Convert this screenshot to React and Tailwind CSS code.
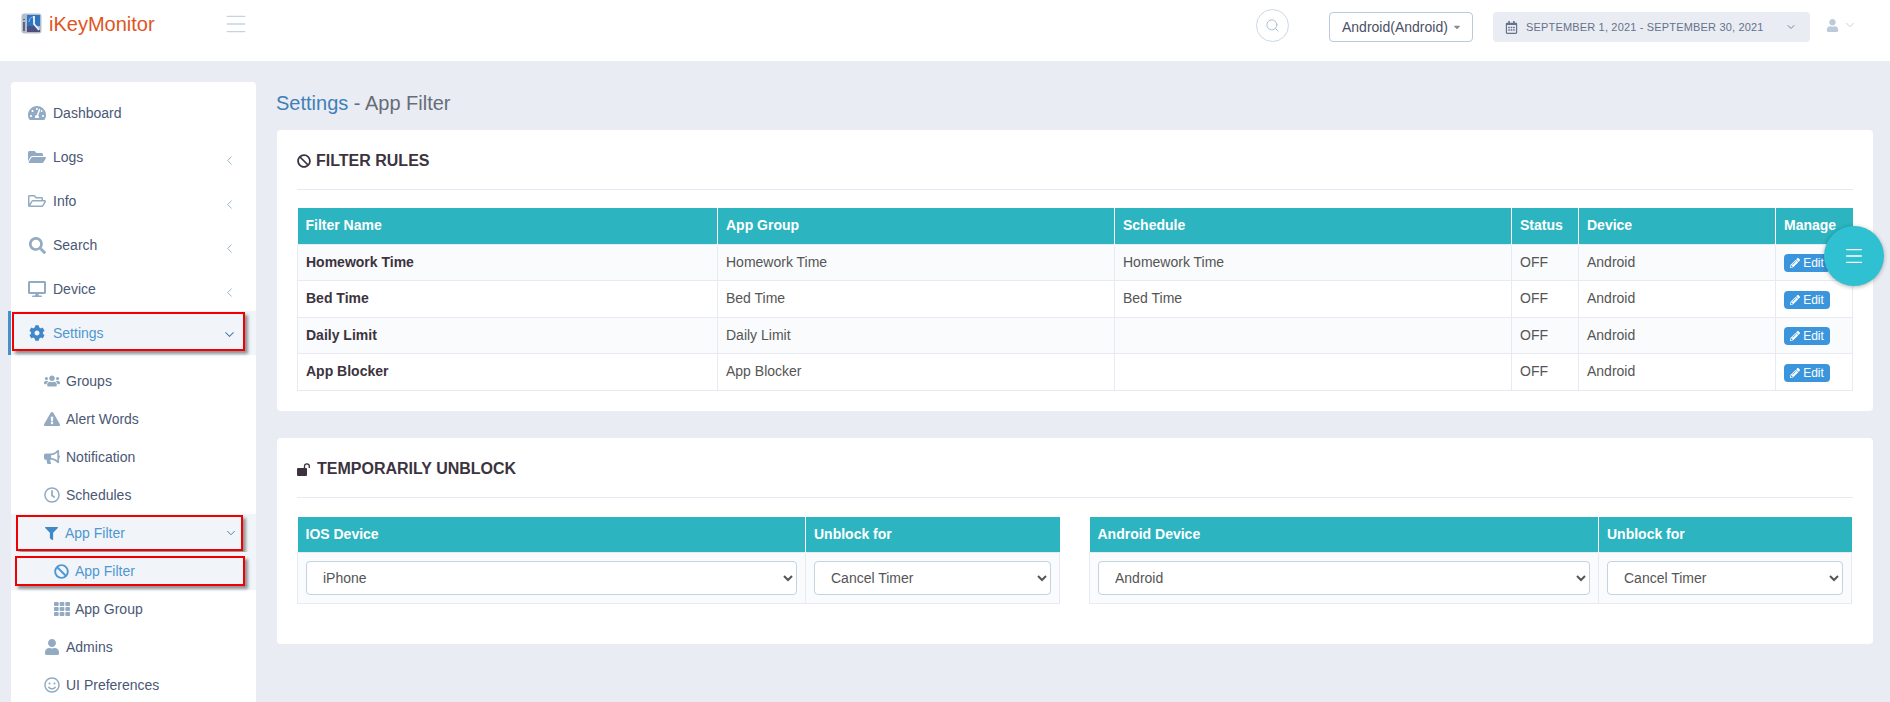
import React from "react";
import {
  FaTachometerAlt,
  FaFolderOpen,
  FaRegFolderOpen,
  FaSearch,
  FaDesktop,
  FaCog,
  FaUsers,
  FaExclamationTriangle,
  FaBullhorn,
  FaRegClock,
  FaFilter,
  FaBan,
  FaTh,
  FaUser,
  FaRegSmile,
  FaPencilAlt,
  FaRegCalendarAlt,
  FaCaretDown,
} from "react-icons/fa";
import { ChevronLeft, ChevronDown, Menu, Search } from "lucide-react";

const font = { fontFamily: '"Liberation Sans", Arial, sans-serif' };

const mainItems = [
  { label: "Dashboard", icon: FaTachometerAlt },
  { label: "Logs", icon: FaFolderOpen, arrow: true },
  { label: "Info", icon: FaRegFolderOpen, arrow: true },
  { label: "Search", icon: FaSearch, arrow: true },
  { label: "Device", icon: FaDesktop, arrow: true },
];

const subItems = [
  { label: "Groups", icon: FaUsers },
  { label: "Alert Words", icon: FaExclamationTriangle },
  { label: "Notification", icon: FaBullhorn },
  { label: "Schedules", icon: FaRegClock },
];

const subItemsAfter = [
  { label: "Admins", icon: FaUser },
  { label: "UI Preferences", icon: FaRegSmile },
];

const rules = [
  { name: "Homework Time", group: "Homework Time", schedule: "Homework Time", h: "h-[36px]" },
  { name: "Bed Time", group: "Bed Time", schedule: "Bed Time", h: "h-[37px]" },
  { name: "Daily Limit", group: "Daily Limit", schedule: "", h: "h-[36px]" },
  { name: "App Blocker", group: "App Blocker", schedule: "", h: "h-[37px]" },
];

const RedBox = ({ className }) => (
  <div
    className={`absolute border-2 border-[#f00000] shadow-[3px_3px_3px_rgba(0,0,0,0.4)] ${className}`}
  ></div>
);

const Logo = () => (
  <svg width="21" height="21" viewBox="0 0 21 21" className="shrink-0">
    <rect x="0.5" y="0.5" width="20" height="20" rx="3" fill="#b4bdcb" />
    <rect x="6" y="2" width="13" height="11" fill="#2f74c0" />
    <path d="M6 13h9l4 4v2H6z" fill="#4a5080" />
    <path d="M3 6v1M3 9v9" stroke="#4a5068" strokeWidth="1.6" fill="none" />
    <path d="M13 3v8l5 6" stroke="#f0f4fa" strokeWidth="1.8" fill="none" />
    <path d="M8 9c0-3 2-5 4-5" stroke="#9cc4ee" strokeWidth="1" fill="none" />
  </svg>
);

// open padlock, shackle lifted to the right
const OpenLock = () => (
  <svg width="14" height="13" viewBox="0 0 14 13" className="mr-[6px] shrink-0">
    <rect x="0" y="5" width="10" height="8" rx="1" fill="currentColor" />
    <path d="M7.5 5V3.2a2.4 2.4 0 0 1 4.8 0V5" fill="none" stroke="currentColor" strokeWidth="1.3" />
  </svg>
);

const MainRow = ({ item }) => {
  const Icon = item.icon;
  return (
    <div className="flex items-center h-[44px] pl-[16px] pr-[19px]">
      <span className="flex justify-center w-[20px] mr-[6px] text-[#93abc2]">
        <Icon size={item.label === "Search" ? 17 : 18} />
      </span>
      <span className="text-[14px] text-[#4a5775]">{item.label}</span>
      {item.arrow && (
        <ChevronLeft size={15} strokeWidth={1.5} className="ml-auto mt-[6px] text-[#8fb0cc]" />
      )}
    </div>
  );
};

const SubRow = ({ item }) => {
  const Icon = item.icon;
  return (
    <div className="flex items-center h-[38px] pl-[32px]">
      <span className="flex justify-center w-[17px] mr-[6px] text-[#93abc2]">
        <Icon size={16} />
      </span>
      <span className="text-[14px] text-[#4a5775]">{item.label}</span>
    </div>
  );
};

const Sidebar = () => (
  <aside className="w-[245px] ml-[11px] mt-[21px] bg-white rounded-t pt-[9px] shrink-0">
    {mainItems.map((item) => (
      <MainRow key={item.label} item={item} />
    ))}

    <div className="relative flex items-center h-[44px] -ml-[3px] pl-[16px] pr-[19px] border-l-[3px] border-[#4a90c8] bg-[#f1f5fa]">
      <span className="flex justify-center w-[20px] mr-[6px] text-[#3f88c9]">
        <FaCog size={16} />
      </span>
      <span className="text-[14px] text-[#4f97cf]">Settings</span>
      <ChevronDown size={15} strokeWidth={1.7} className="ml-auto mt-[2px] text-[#4f7ea8]" />
      <RedBox className="left-[1px] top-[1px] w-[233px] h-[39px]" />
    </div>

    <div className="pt-[7px]">
      {subItems.map((item) => (
        <SubRow key={item.label} item={item} />
      ))}

      <div className="relative flex items-center h-[38px] pl-[32px] pr-[18px] bg-[#f1f5fa]">
        <span className="flex justify-center w-[17px] mr-[5px] text-[#3f88c9]">
          <FaFilter size={13} />
        </span>
        <span className="text-[14px] text-[#4f97cf]">App Filter</span>
        <ChevronDown size={14} strokeWidth={1.7} className="ml-auto text-[#4f7ea8]" />
        <RedBox className="left-[5px] top-[1px] w-[227px] h-[36px]" />
      </div>

      <div className="relative flex items-center h-[38px] pl-[43px] bg-[#f1f5fa]">
        <span className="flex justify-center w-[15px] mr-[6px] text-[#4f97cf]">
          <FaBan size={15} />
        </span>
        <span className="text-[14px] text-[#4f97cf]">App Filter</span>
        <RedBox className="left-[4px] top-[4px] w-[230px] h-[30px]" />
      </div>

      <div className="flex items-center h-[38px] pl-[42px]">
        <span className="flex justify-center w-[17px] mr-[5px] text-[#93abc2]">
          <FaTh size={16} />
        </span>
        <span className="text-[14px] text-[#4a5775]">App Group</span>
      </div>

      {subItemsAfter.map((item) => (
        <SubRow key={item.label} item={item} />
      ))}
    </div>
  </aside>
);

const Header = () => (
  <header className="flex items-center h-[61px] bg-white shrink-0">
    <div className="flex items-center pl-[21px] -mt-[14px]">
      <Logo />
      <span className="ml-[7px] text-[20px] text-[#e0541f]">iKeyMonitor</span>
      <Menu size={26} strokeWidth={1.2} className="ml-[68px] text-[#c5d3e2]" />
    </div>
    <div className="flex items-center ml-auto -mt-[11px]">
      <span className="flex items-center justify-center w-[33px] h-[33px] rounded-full border border-[#cbd8e5]">
        <Search size={15} strokeWidth={1.5} className="text-[#a9bccd]" />
      </span>
      <div className="flex items-center w-[144px] h-[30px] ml-[40px] mt-[4px] pl-[12px] rounded border border-[#b8cadb] text-[14px] text-[#4a5068]">
        Android(Android)
        <FaCaretDown size={10} className="ml-[4px] text-[#8b8b8b]" />
      </div>
      <div className="flex items-center w-[317px] h-[30px] ml-[20px] mt-[4px] pl-[12px] rounded bg-[#e9ecf3] text-[11px] tracking-[0.17px] text-[#66728a]">
        <FaRegCalendarAlt size={13} className="mr-[8px] text-[#66728a]" />
        SEPTEMBER 1, 2021 - SEPTEMBER 30, 2021
        <ChevronDown size={12} className="ml-[21px] text-[#7a8699]" />
      </div>
      <FaUser size={13} className="ml-[16px] text-[#bccbd9]" />
      <ChevronDown size={14} strokeWidth={1.5} className="ml-[4px] mr-[33px] text-[#bccbd9]" />
    </div>
  </header>
);

const EditButton = () => (
  <span className="inline-flex items-center justify-center w-[46px] h-[18px] mt-[1px] rounded-sm bg-[#3a95dc] text-[12px] text-white align-middle">
    <FaPencilAlt size={10} className="mr-[3px]" />
    Edit
  </span>
);

const thClass = "px-[8px] text-left font-bold text-white border-l border-white first:border-l-0";
const tdClass = "px-[8px] border border-[#e7eaf2]";

const FilterRules = () => (
  <section className="bg-white rounded px-[20px] pt-[20px] h-[281px]">
    <h2 className="flex items-center h-[22px] text-[16px] font-bold text-[#3c3340]">
      <FaBan size={14} className="mr-[5px]" />
      FILTER RULES
    </h2>
    <div className="h-px mt-[17px] mb-[18px] bg-[#e7eaf2]"></div>
    <table className="w-[1555px] table-fixed border-collapse text-[14px] text-[#555]">
      <colgroup>
        <col className="w-[420px]" />
        <col className="w-[397px]" />
        <col className="w-[397px]" />
        <col className="w-[67px]" />
        <col className="w-[197px]" />
        <col className="w-[77px]" />
      </colgroup>
      <thead>
        <tr className="h-[36px] bg-[#2cb4c0]">
          <th className={thClass}>Filter Name</th>
          <th className={thClass}>App Group</th>
          <th className={thClass}>Schedule</th>
          <th className={thClass}>Status</th>
          <th className={thClass}>Device</th>
          <th className={thClass}>Manage</th>
        </tr>
      </thead>
      <tbody>
        {rules.map((rule, index) => (
          <tr key={rule.name} className={`${rule.h} ${index % 2 === 0 ? "bg-[#f9fbfc]" : "bg-white"}`}>
            <td className={`${tdClass} font-bold text-[#3c3340]`}>{rule.name}</td>
            <td className={tdClass}>{rule.group}</td>
            <td className={tdClass}>{rule.schedule}</td>
            <td className={tdClass}>OFF</td>
            <td className={tdClass}>Android</td>
            <td className={tdClass}>
              <EditButton />
            </td>
          </tr>
        ))}
      </tbody>
    </table>
  </section>
);

const UnblockTable = ({ title, device, widths }) => (
  <table className={`table-fixed border-collapse text-[14px] text-[#555] ${widths.table}`}>
    <colgroup>
      <col className={widths.first} />
      <col className={widths.second} />
    </colgroup>
    <thead>
      <tr className="h-[35px] bg-[#2cb4c0]">
        <th className={thClass}>{title}</th>
        <th className={thClass}>Unblock for</th>
      </tr>
    </thead>
    <tbody>
      <tr className="h-[51px] bg-[#f9fbfc]">
        <td className={tdClass}>
          <select className="w-full h-[34px] px-[12px] rounded border border-[#c3d3e0] bg-white text-[14px] text-[#555]">
            <option>{device}</option>
          </select>
        </td>
        <td className={tdClass}>
          <select className="w-full h-[34px] px-[12px] rounded border border-[#c3d3e0] bg-white text-[14px] text-[#555]">
            <option>Cancel Timer</option>
          </select>
        </td>
      </tr>
    </tbody>
  </table>
);

const TemporarilyUnblock = () => (
  <section className="mt-[27px] bg-white rounded px-[20px] pt-[20px] h-[206px]">
    <h2 className="flex items-center h-[22px] text-[16px] font-bold text-[#3c3340]">
      <OpenLock />
      TEMPORARILY UNBLOCK
    </h2>
    <div className="h-px mt-[17px] mb-[19px] bg-[#e7eaf2]"></div>
    <div className="flex justify-between w-[1555px]">
      <UnblockTable
        title="IOS Device"
        device="iPhone"
        widths={{ table: "w-[762px]", first: "w-[508px]", second: "w-[254px]" }}
      />
      <UnblockTable
        title="Android Device"
        device="Android"
        widths={{ table: "w-[762px]", first: "w-[509px]", second: "w-[253px]" }}
      />
    </div>
  </section>
);

const App = () => (
  <div className="relative flex flex-col h-[702px] overflow-hidden bg-[#e9ecf3]" style={font}>
    <Header />
    <div className="flex flex-1">
      <Sidebar />
      <main className="flex-1 pl-[21px] pr-[17px]">
        <h1 className="flex items-center h-[69px] pt-[14px] -ml-[1px] text-[20px] text-[#666c78]">
          <span className="text-[#3f80b8]">Settings</span>&nbsp;- App Filter
        </h1>
        <FilterRules />
        <TemporarilyUnblock />
      </main>
    </div>

    {/* Floating menu button */}
    <button className="absolute left-[1824px] top-[226px] flex items-center justify-center w-[60px] h-[60px] rounded-full bg-[#2fc0d2] text-white shadow-[0_1px_4px_rgba(0,0,0,0.3)]">
      <Menu size={22} strokeWidth={1.5} />
    </button>
  </div>
);

export default App;
